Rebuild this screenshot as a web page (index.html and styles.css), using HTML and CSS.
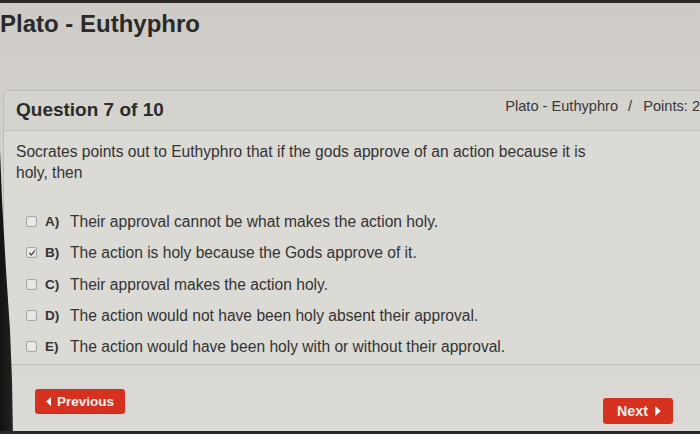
FILE: index.html
```html
<!DOCTYPE html>
<html lang="en">
<head>
<meta charset="utf-8">
<title>Plato - Euthyphro</title>
<link rel="stylesheet" href="styles.css">
</head>
<body>
<div class="screen">
  <div class="bezel-top"></div>
  <h1 class="title">Plato - Euthyphro</h1>
  <section class="card">
    <header class="card-head">
      <h2 class="qnum">Question 7 of 10</h2>
      <div class="meta">Plato - Euthyphro <span class="sep">/</span> Points: 2</div>
    </header>
    <div class="card-body">
      <p class="prompt">Socrates points out to Euthyphro that if the gods approve of an action because it is holy, then</p>
      <ul class="options">
        <li class="option"><span class="cb"></span><span class="key">A)</span><span class="txt">Their approval cannot be what makes the action holy.</span></li>
        <li class="option"><span class="cb checked"><svg viewBox="0 0 10 10" width="10" height="10"><polyline points="2.6,5.2 4.3,7 7.6,2.8" fill="none" stroke="#4a4a4a" stroke-width="1.3" stroke-linecap="round" stroke-linejoin="round"/></svg></span><span class="key">B)</span><span class="txt">The action is holy because the Gods approve of it.</span></li>
        <li class="option"><span class="cb"></span><span class="key">C)</span><span class="txt">Their approval makes the action holy.</span></li>
        <li class="option"><span class="cb"></span><span class="key">D)</span><span class="txt">The action would not have been holy absent their approval.</span></li>
        <li class="option"><span class="cb"></span><span class="key">E)</span><span class="txt">The action would have been holy with or without their approval.</span></li>
      </ul>
    </div>
  </section>
  <nav class="pager">
    <button class="btn prev"><svg viewBox="0 0 5 9" width="5" height="9"><polygon points="5,0 5,9 0,4.5" fill="#fff"/></svg>Previous</button>
    <button class="btn next">Next<svg viewBox="0 0 5 9" width="6" height="10"><polygon points="0,0 0,9 5,4.5" fill="#fff"/></svg></button>
  </nav>
</div>
</body>
</html>
```

FILE: styles.css
```css
html, body {
  margin: 0;
  padding: 0;
}

body {
  background: #d6d5d0;
  font-family: "Liberation Sans", Arial, sans-serif;
  color: #2f2f2f;
}

.screen {
  position: relative;
  width: 700px;
  height: 434px;
  overflow: hidden;
  background: linear-gradient(180deg, #cecbc6 0%, #d5d3ce 45%, #dbdad6 100%);
}

.screen::before {
  content: "";
  position: absolute;
  left: 0;
  top: 0;
  width: 16px;
  height: 434px;
  background: linear-gradient(90deg, #151312 0%, #1f1c1b 60%, #3a3735 100%);
  clip-path: polygon(0 150px, 2px 200px, 6px 270px, 10px 330px, 12px 380px, 13px 434px, 0 434px);
}

.screen::after {
  content: "";
  position: absolute;
  left: 0;
  right: 0;
  bottom: 0;
  height: 3px;
  background: #2a2725;
}

.bezel-top {
  height: 3px;
  background: #2b2826;
}

.title {
  margin: 7px 0 0 0;
  font-size: 24px;
  line-height: 28px;
  font-weight: bold;
  color: #2a2a2a;
}

.card {
  margin: 52px 0 0 3px;
  width: 708px;
  border: 1px solid #bebcb7;
  border-radius: 3px;
  background: #dbdad5;
}

.card-head {
  display: flex;
  justify-content: space-between;
  align-items: flex-start;
  padding: 7px 12px 8px 12px;
  border-bottom: 1px solid #c2c0bb;
  background: #d5d3ce;
}

.qnum {
  margin: 0;
  font-size: 19px;
  line-height: 24px;
  font-weight: bold;
  color: #2b2b2b;
}

.meta {
  margin-top: -1px;
  font-size: 14.6px;
  line-height: 18px;
  white-space: nowrap;
  color: #383838;
}

.sep {
  margin: 0 7px 0 6px;
}

.card-body {
  padding: 10px 12px 2px 12px;
}

.prompt {
  margin: 0;
  max-width: 590px;
  font-size: 15.6px;
  line-height: 21px;
  color: #333;
}

.options {
  list-style: none;
  margin: 23px 0 0 0;
  padding: 0;
}

.option {
  display: flex;
  align-items: center;
  height: 31.25px;
  line-height: 31.25px;
  font-size: 15.6px;
  color: #333;
}

.cb {
  box-sizing: border-box;
  width: 11px;
  height: 11px;
  margin: 0 8px 0 10px;
  border: 1px solid #a9a7a3;
  border-radius: 2px;
  background: #e9e8e5;
  box-shadow: inset 0 0 1px rgba(0, 0, 0, 0.15);
  display: flex;
  align-items: center;
  justify-content: center;
  flex: none;
}

.cb svg {
  display: block;
  flex: none;
}

.key {
  width: 25px;
  flex: none;
  font-size: 13.5px;
  font-weight: bold;
  color: #333;
}

.pager {
  display: flex;
  justify-content: space-between;
  align-items: flex-start;
  margin-top: 24px;
  padding: 0 27px 0 35px;
}

.btn {
  display: inline-flex;
  align-items: center;
  border: none;
  border-radius: 3px;
  background: #d6311f;
  color: #fbf3f1;
  font-family: "Liberation Sans", Arial, sans-serif;
  font-weight: bold;
  cursor: pointer;
}

.btn svg {
  display: block;
  flex: none;
}

.prev {
  height: 25px;
  padding: 0 11px;
  gap: 6px;
  font-size: 13.5px;
}

.next {
  margin-top: 9px;
  height: 26px;
  padding: 0 12px 0 14px;
  gap: 7px;
  font-size: 14.3px;
}
```
